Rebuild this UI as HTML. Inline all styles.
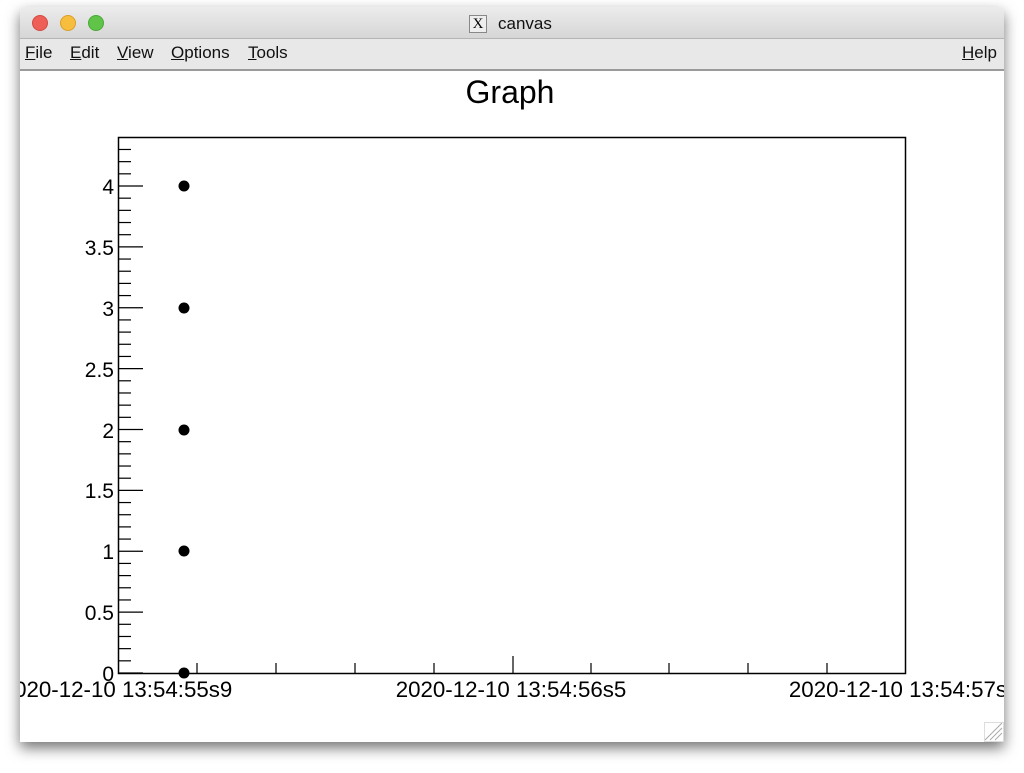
<!DOCTYPE html>
<html><head><meta charset="utf-8"><style>
html,body{margin:0;padding:0;background:#fff;width:1024px;height:773px;overflow:hidden;font-family:"Liberation Sans",sans-serif}
.win{position:absolute;left:20px;top:7px;width:984px;height:735px;background:#fff;box-shadow:0 6px 14px rgba(0,0,0,.55);border-radius:5px 5px 0 0;overflow:hidden}
.title{position:absolute;left:0;top:0;width:984px;height:31px;background:linear-gradient(#ececec,#d6d6d6);border-bottom:1px solid #b5b5b5}
.dot{position:absolute;top:8px;width:15px;height:15px;border-radius:50%}
.menu{position:absolute;left:0;top:32px;width:984px;height:30px;background:#e8e8e8;border-bottom:2px solid #9a9a9a;font-size:17px;color:#111}
.menu span{position:absolute;top:4px}
u{text-decoration:underline}
</style></head><body>
<div class="win">
 <div class="title">
  <div class="dot" style="left:12px;background:#ee5f58;border:1px solid #d34a43;width:14px;height:14px"></div>
  <div class="dot" style="left:40px;background:#f7bd3c;border:1px solid #d9a02a;width:14px;height:14px"></div>
  <div class="dot" style="left:68px;background:#5fc447;border:1px solid #4aa936;width:14px;height:14px"></div>
  <div style="position:absolute;left:449px;top:8px;width:16px;height:16px;border:1px solid #888;background:#eee;font:15px 'Liberation Serif',serif;text-align:center;line-height:16px">X</div>
  <div style="position:absolute;left:478px;top:7px;font-size:17px;color:#111">canvas</div>
 </div>
 <div class="menu">
  <span style="left:5px"><u>F</u>ile</span>
  <span style="left:50px"><u>E</u>dit</span>
  <span style="left:97px"><u>V</u>iew</span>
  <span style="left:151px"><u>O</u>ptions</span>
  <span style="left:228px"><u>T</u>ools</span>
  <span style="left:942px"><u>H</u>elp</span>
 </div>
</div>
<svg id="s" width="1024" height="773" style="position:absolute;left:0;top:0">
 <defs><clipPath id="c"><rect x="20" y="70" width="984" height="672"/></clipPath></defs>
 <g clip-path="url(#c)" font-family="Liberation Sans, sans-serif" fill="#000">
  <text x="510" y="103" font-size="32" text-anchor="middle">Graph</text>
  <rect x="118.5" y="137.5" width="787" height="536" fill="none" stroke="#000" stroke-width="1.5"/>
  <g id="ticks" stroke="#000" stroke-width="1.2"></g>
  <g font-size="21" text-anchor="end">
   <text x="114" y="681">0</text><text x="114" y="620">0.5</text><text x="114" y="559">1</text>
   <text x="114" y="498">1.5</text><text x="114" y="438">2</text><text x="114" y="377">2.5</text>
   <text x="114" y="316">3</text><text x="114" y="255">3.5</text><text x="114" y="194">4</text>
  </g>
  <g font-size="22.3" text-anchor="middle">
   <text x="117" y="697">2020-12-10 13:54:55s9</text>
   <text x="511" y="697">2020-12-10 13:54:56s5</text>
   <text x="898" y="697">2020-12-10 13:54:57s</text>
  </g>
  <circle cx="184" cy="186" r="5.5"/><circle cx="184" cy="308" r="5.5"/>
  <circle cx="184" cy="430" r="5.5"/><circle cx="184" cy="551" r="5.5"/><circle cx="184" cy="673" r="5.5"/>
  <path d="M985 740 L1002 723 M990 740 L1002 728 M995 740 L1002 733" stroke="#aaa" stroke-width="1"/>
  <rect x="984.5" y="722.5" width="19" height="19" fill="none" stroke="#ddd"/>
 </g>
</svg>
<script>
var g=document.getElementById('ticks'),h='';
for(var i=0;i<=43;i++){var y=673-12.175*i;var l=(i%5==0)?25:13;h+='<line x1="118" x2="'+(118+l)+'" y1="'+y+'" y2="'+y+'"/>';}
var xs=[197,276,355,434,513,591,669,748,827];
xs.forEach(function(x){var l=x==513?17:10;h+='<line x1="'+x+'" x2="'+x+'" y1="673" y2="'+(673-l)+'"/>';});
g.innerHTML=h;
</script>
</body></html>
